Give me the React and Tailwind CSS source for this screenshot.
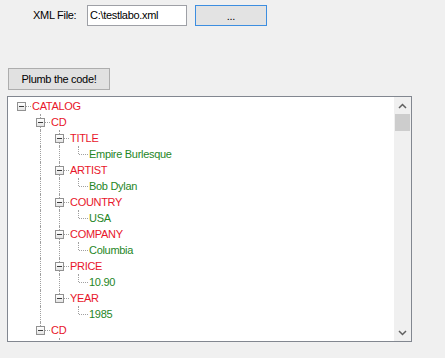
import React from 'react'

const CDS = [
  [['TITLE','Empire Burlesque'],['ARTIST','Bob Dylan'],['COUNTRY','USA'],['COMPANY','Columbia'],['PRICE','10.90'],['YEAR','1985']],
  [['TITLE','Hide your heart'],['ARTIST','Bonnie Tyler'],['COUNTRY','UK'],['COMPANY','CBS Records'],['PRICE','9.90'],['YEAR','1988']],
]

const VISIBLE = 15

// flatten the xml tree into rows, keeping which ancestor levels still need a guide line
function buildRows(){
  const rows = [{label:'CATALOG', level:0, el:true, kids:true, first:true, last:true, guides:[]}]
  CDS.forEach((cd,ci)=>{
    const cdLast = ci===CDS.length-1
    rows.push({label:'CD', level:1, el:true, kids:true, last:cdLast, guides:[false]})
    cd.forEach(([tag,val],ti)=>{
      const tLast = ti===cd.length-1
      rows.push({label:tag, level:2, el:true, kids:true, last:tLast, guides:[false,!cdLast]})
      rows.push({label:val, level:3, el:false, kids:false, last:true, guides:[false,!cdLast,!tLast]})
    })
  })
  return rows
}

function Row({r, peek}){
  return (
    <div className="flex h-[16px]">
      {r.guides.map((g,i)=>(
        <div key={i} className="relative w-[19px] shrink-0">
          {g && <div className="absolute left-[9px] top-0 h-[16px] border-l border-dotted border-[#a0a0a0]" />}
        </div>
      ))}
      <div className="relative w-[19px] shrink-0">
        {!r.first && <div className="absolute left-[9px] top-0 h-[8px] border-l border-dotted border-[#a0a0a0]" />}
        {!peek && !r.last && <div className="absolute left-[9px] top-[8px] h-[8px] border-l border-dotted border-[#a0a0a0]" />}
        {!peek && <div className="absolute left-[10px] top-[8px] w-[9px] border-t border-dotted border-[#a0a0a0]" />}
        {!peek && r.kids && (
          <div className="absolute left-[5px] top-[4px] w-[9px] h-[9px] border border-[#919191] bg-gradient-to-b from-white to-[#e4e4e4] flex items-center justify-center">
            <div className="w-[5px] h-px bg-[#3c3c3c]" />
          </div>
        )}
      </div>
      {!peek && (
        <span className={`pl-[1px] leading-[16px] whitespace-nowrap ${r.el ? 'text-[#e8162a]' : 'text-[#1f861f]'}`}>{r.label}</span>
      )}
    </div>
  )
}

export default function App(){
  const rows = buildRows().slice(0, VISIBLE + 1)
  return (
    <div className="w-[445px] h-[358px] bg-[#f0f0f0] text-[11px] tracking-[-0.3px] text-black overflow-hidden" style={{fontFamily:'"Liberation Sans", Arial, sans-serif'}}>
      <div className="flex items-center pl-[33px] pt-[5px]">
        <span className="w-[54px]">XML File:</span>
        <div className="w-[100px] h-[21px] bg-white border border-[#9ea0a6] flex items-center pl-[2px]">C:\testlabo.xml</div>
        <button className="ml-[8px] w-[72px] h-[21px] border border-[#3d8ee0] bg-[#e3e3e3] flex items-center justify-center pt-px">...</button>
      </div>

      <div className="pl-[8px] pt-[42px]">
        <button className="w-[102px] h-[22px] border border-[#adadad] bg-[#e1e1e1] flex items-center justify-center">Plumb the code!</button>
      </div>

      <div className="ml-[7px] mt-[6px] w-[405px] h-[246px] bg-white border border-[#828790] flex">
        <div className="flex-1 overflow-hidden pl-[4px] pt-px">
          {rows.map((r,i)=><Row key={i} r={r} peek={i===VISIBLE} />)}
        </div>
        <div className="w-[17px] bg-[#f0f0f0] flex flex-col">
          <div className="h-[17px] flex items-center justify-center">
            <svg width="9" height="6" viewBox="0 0 9 6"><path d="M1 5 L4.5 1.5 L8 5" fill="none" stroke="#606060" strokeWidth="1.5" /></svg>
          </div>
          <div className="h-[17px] bg-[#cdcdcd] mx-px" />
          <div className="flex-1" />
          <div className="h-[17px] flex items-center justify-center">
            <svg width="9" height="6" viewBox="0 0 9 6"><path d="M1 1 L4.5 4.5 L8 1" fill="none" stroke="#606060" strokeWidth="1.5" /></svg>
          </div>
        </div>
      </div>
    </div>
  )
}
